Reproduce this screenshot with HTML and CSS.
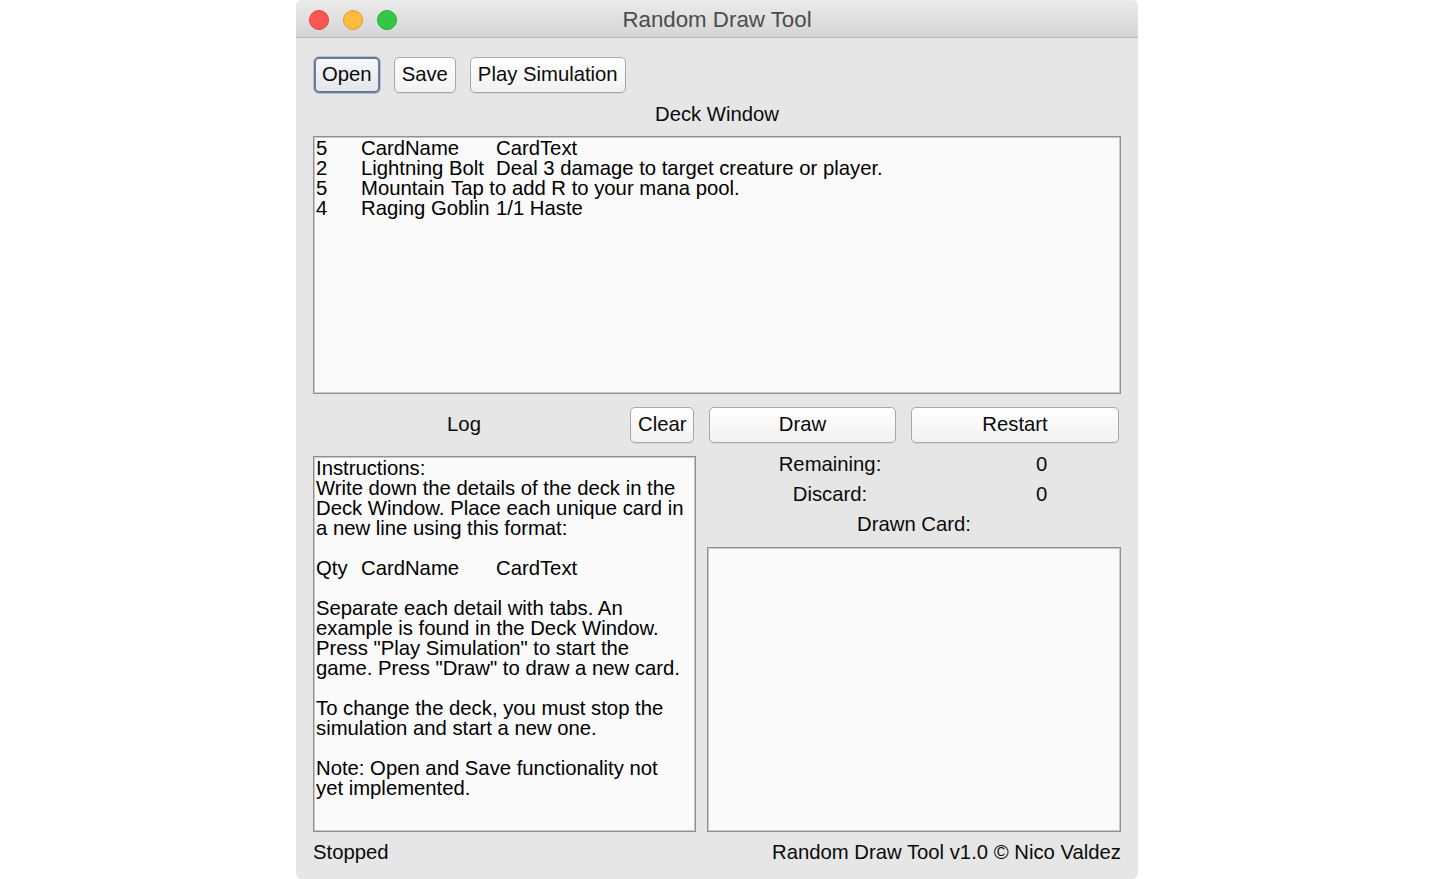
FILE: index.html
```html
<!DOCTYPE html>
<html lang="en">
<head>
  <meta charset="UTF-8" />
  <title>Random Draw Tool</title>
  <link rel="stylesheet" href="styles.css">
</head>
<body>
  <div class="window">
    <header class="titlebar">
      <div class="lights">
        <span class="light close"></span>
        <span class="light min"></span>
        <span class="light max"></span>
      </div>
      <div class="title">Random Draw Tool</div>
    </header>
    <main class="content">
      <div class="toolbar">
        <button class="btn focused">Open</button>
        <button class="btn">Save</button>
        <button class="btn">Play Simulation</button>
      </div>
      <div class="label deck-label">Deck Window</div>
      <div class="textbox deck">5	CardName	CardText
2	Lightning Bolt	Deal 3 damage to target creature or player.
5	Mountain	Tap to add R to your mana pool.
4	Raging Goblin	1/1 Haste</div>
      <div class="controls">
        <div class="label log-label">Log</div>
        <button class="btn clear">Clear</button>
        <button class="btn draw">Draw</button>
        <button class="btn restart">Restart</button>
      </div>
      <div class="lower">
        <div class="textbox log">Instructions:
Write down the details of the deck in the
Deck Window. Place each unique card in
a new line using this format:

Qty	CardName	CardText

Separate each detail with tabs. An
example is found in the Deck Window.
Press "Play Simulation" to start the
game. Press "Draw" to draw a new card.

To change the deck, you must stop the
simulation and start a new one.

Note: Open and Save functionality not
yet implemented.</div>
        <div class="side">
          <div class="stats">
            <div class="stat-name">Remaining:</div>
            <div class="stat-value">0</div>
            <div class="stat-name">Discard:</div>
            <div class="stat-value">0</div>
          </div>
          <div class="label drawn-label">Drawn Card:</div>
          <div class="textbox drawn"></div>
        </div>
      </div>
      <footer class="status">
        <span>Stopped</span>
        <span>Random Draw Tool v1.0 © Nico Valdez</span>
      </footer>
    </main>
  </div>
</body>
</html>
```

FILE: styles.css
```css
body {
  margin: 0;
  background: #fff;
  font-family: "Liberation Sans", Arial, sans-serif;
  font-size: 20.3px;
  color: #0a0a0a;
}
.window {
  width: 842px;
  height: 879px;
  margin: 0 0 0 296px;
  background: #e6e6e6;
  border-radius: 6px;
  overflow: hidden;
}
.titlebar {
  height: 37px;
  border-bottom: 1px solid #b9b9b9;
  background: linear-gradient(#ebebeb, #d5d5d5);
  display: flex;
  align-items: center;
  position: relative;
}
.lights {
  display: flex;
  gap: 14px;
  padding-left: 13px;
  padding-top: 3px;
}
.light {
  width: 20px;
  height: 20px;
  border-radius: 50%;
  box-sizing: border-box;
}
.close { background: #fc5753; border: 1px solid #df3d38; }
.min { background: #fdbc40; border: 1px solid #de9f29; }
.max { background: #33c748; border: 1px solid #27aa35; }
.title {
  position: absolute;
  left: 0;
  right: 0;
  top: 7px;
  text-align: center;
  color: #4c4c4c;
  font-size: 22.3px;
  line-height: 26px;
}
.content {
  padding: 0 17px;
}
.btn {
  font: inherit;
  color: #0a0a0a;
  height: 36px;
  padding: 0 7px 2px;
  background: linear-gradient(#ffffff, #f1f1f1);
  border: 1px solid #a8a8a8;
  border-radius: 5px;
  box-shadow: 0 1px 0 rgba(0,0,0,0.06);
}
.btn.focused {
  border: 2px solid #6a7a92;
  padding: 0 6px 2px;
  background: linear-gradient(#f7f8fa, #e3e6ea);
  box-shadow: 0 0 0 1px #b4c0d4;
}
.toolbar {
  display: flex;
  gap: 14px;
  margin-top: 19px;
  padding-left: 1px;
}
.label {
  line-height: 20px;
  text-align: center;
}
.deck-label {
  margin-top: 11px;
}
.textbox {
  background: #fafafa;
  border: 1px solid #8f8f8f;
  box-shadow: inset 0 0 0 1px #c9c9c9;
  box-sizing: border-box;
  white-space: pre;
  tab-size: 45px;
  line-height: 20px;
  padding: 1px 2px;
  color: #000;
}
.deck {
  margin-top: 12px;
  height: 258px;
}
.controls {
  display: flex;
  align-items: center;
  margin-top: 13px;
  gap: 15px;
  padding-right: 2px;
}
.log-label {
  flex: 1;
  padding-bottom: 2px;
}
.clear { width: 64px; }
.draw { width: 187px; }
.restart { width: 208px; }
.lower {
  display: flex;
  gap: 11px;
  margin-top: 6px;
}
.log {
  margin-top: 7px;
  width: 383px;
  height: 376px;
}
.side {
  flex: 1;
}
.stats {
  display: grid;
  grid-template-columns: 246px 1fr;
  grid-auto-rows: 30px;
  align-items: center;
}
.stat-name {
  text-align: center;
}
.stat-value {
  padding-left: 83px;
}
.drawn-label {
  line-height: 30px;
}
.drawn {
  margin-top: 8px;
  height: 285px;
}
.status {
  display: flex;
  justify-content: space-between;
  margin-top: 10px;
  line-height: 20px;
}
```
